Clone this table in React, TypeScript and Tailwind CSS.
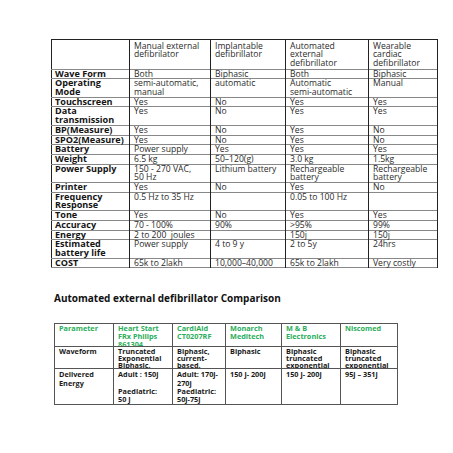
const specRows: { label: string[]; cells: string[][] }[] = [
  { label: ["Wave Form"], cells: [["Both"], ["Biphasic"], ["Both"], ["Biphasic"]] },
  {
    label: ["Operating", "Mode"],
    cells: [["semi-automatic,", "manual"], ["automatic"], ["Automatic", "semi-automatic"], ["Manual"]],
  },
  { label: ["Touchscreen"], cells: [["Yes"], ["No"], ["Yes"], ["Yes"]] },
  { label: ["Data", "transmission"], cells: [["Yes"], ["No"], ["Yes"], ["Yes"]] },
  { label: ["BP(Measure)"], cells: [["Yes"], ["No"], ["Yes"], ["No"]] },
  { label: ["SPO2(Measure)"], cells: [["Yes"], ["No"], ["Yes"], ["No"]] },
  { label: ["Battery"], cells: [["Power supply"], ["Yes"], ["Yes"], ["Yes"]] },
  { label: ["Weight"], cells: [["6.5 kg"], ["50–120(g)"], ["3.0 kg"], ["1.5kg"]] },
  {
    label: ["Power Supply"],
    cells: [["150 - 270 VAC,", "50 Hz"], ["Lithium battery"], ["Rechargeable", "battery"], ["Rechargeable", "battery"]],
  },
  { label: ["Printer"], cells: [["Yes"], ["No"], ["Yes"], ["No"]] },
  { label: ["Frequency", "Response"], cells: [["0.5 Hz to 35 Hz"], [], ["0.05 to 100 Hz"], []] },
  { label: ["Tone"], cells: [["Yes"], ["No"], ["Yes"], ["Yes"]] },
  { label: ["Accuracy"], cells: [["70 - 100%"], ["90%"], [">95%"], ["99%"]] },
  { label: ["Energy"], cells: [["2 to 200  joules"], [], ["150j"], ["150j"]] },
  { label: ["Estimated", "battery life"], cells: [["Power supply"], ["4 to 9 y"], ["2 to 5y"], ["24hrs"]] },
  { label: ["COST"], cells: [["65k to 2lakh"], ["10,000–40,000"], ["65k to 2lakh"], ["Very costly"]] },
];

const specHeads = [
  ["Manual external", "defibrilator"],
  ["Implantable", "defibrillator"],
  ["Automated", "external", "defibrillator"],
  ["Wearable", "cardiac", "defibrillator"],
];

const specWidths = ["w-[78px]", "w-[81px]", "w-[75px]", "w-[83px]", "w-[69px]"];

const aedHeads = [
  ["Parameter"],
  ["Heart Start", "FRx Philips", "861304"],
  ["CardiAid", "CT0207RF"],
  ["Monarch", "Meditech"],
  ["M & B", "Electronics"],
  ["Niscomed"],
];

const aedRows: { h: string; lh: string; cells: string[][] }[] = [
  {
    h: "h-[21px]",
    lh: "leading-[7px]",
    cells: [
      ["Waveform"],
      ["Truncated", "Exponential", "Biphasic."],
      ["Biphasic,", "current-", "based."],
      ["Biphasic"],
      ["Biphasic", "truncated", "exponential"],
      ["Biphasic", "truncated", "exponential"],
    ],
  },
  {
    h: "h-[35px]",
    lh: "leading-[8.2px]",
    cells: [
      ["Delivered", "Energy"],
      ["Adult : 150j", "\u00a0", "Paediatric:", "50 J"],
      ["Adult: 170j-", "270j", "Paediatric:", "50j-75j"],
      ["150 j- 200j"],
      ["150 j- 200j"],
      ["95j – 351j"],
    ],
  },
];

const aedWidths = ["w-[59px]", "w-[59px]", "w-[53px]", "w-[56px]", "w-[59px]", "w-[57px]"];

function Lines({ lines }: { lines: string[] }) {
  return (
    <>
      {lines.map((l, i) => (
        <div key={i} className="whitespace-pre">
          {l}
        </div>
      ))}
    </>
  );
}

export default function App() {
  return (
    <div
      className="w-[453px] h-[453px] bg-white text-[#2a2a2a] overflow-hidden"
      style={{ fontFamily: '"Open Sans", "Liberation Sans", sans-serif' }}
    >
      <div className="pt-[39px] pl-[51px]">
        <table className="table-fixed border-collapse border border-[#222] text-[8.6px] leading-[8.7px]">
          <colgroup>
            {specWidths.map((w, i) => (
              <col key={i} className={w} />
            ))}
          </colgroup>
          <tbody>
            <tr className="border-b border-[#888]">
              <td className="border-r border-[#222] px-[3px]" />
              {specHeads.map((h, i) => (
                <td key={i} className="border-r border-[#222] px-[4px] pt-[1.5px] pb-[1px] align-top">
                  <Lines lines={h} />
                </td>
              ))}
            </tr>
            {specRows.map((r, ri) => (
              <tr key={ri} className="border-b border-[#888]">
                <td className="border-r border-[#222] px-[3px] align-top font-bold text-[9.1px] text-[#141414]">
                  <Lines lines={r.label} />
                </td>
                {r.cells.map((c, ci) => (
                  <td key={ci} className="border-r border-[#222] px-[4px] align-top">
                    <Lines lines={c} />
                  </td>
                ))}
              </tr>
            ))}
          </tbody>
        </table>
      </div>

      <div className="pl-[54px] mt-[24px] text-[10px] leading-[12px] font-bold text-[#111]">
        Automated external defibrillator Comparison
      </div>

      <div className="pl-[54px] mt-[19px]">
        <table className="table-fixed border-collapse border border-[#555] text-[7.3px] font-bold">
          <colgroup>
            {aedWidths.map((w, i) => (
              <col key={i} className={w} />
            ))}
          </colgroup>
          <tbody>
            <tr>
              {aedHeads.map((h, i) => (
                <td key={i} className="border border-[#555] p-0 align-top">
                  <div className="h-[22px] overflow-hidden px-[4px] pt-[1px] leading-[7.8px] text-[#2aae5a]">
                    <Lines lines={h} />
                  </div>
                </td>
              ))}
            </tr>
            {aedRows.map((r, ri) => (
              <tr key={ri}>
                {r.cells.map((c, ci) => (
                  <td key={ci} className="border border-[#555] p-0 align-top">
                    <div className={`${r.h} ${r.lh} overflow-hidden px-[4px] pt-[1px] text-[#1a1a1a]`}>
                      <Lines lines={c} />
                    </div>
                  </td>
                ))}
              </tr>
            ))}
          </tbody>
        </table>
      </div>
    </div>
  );
}
